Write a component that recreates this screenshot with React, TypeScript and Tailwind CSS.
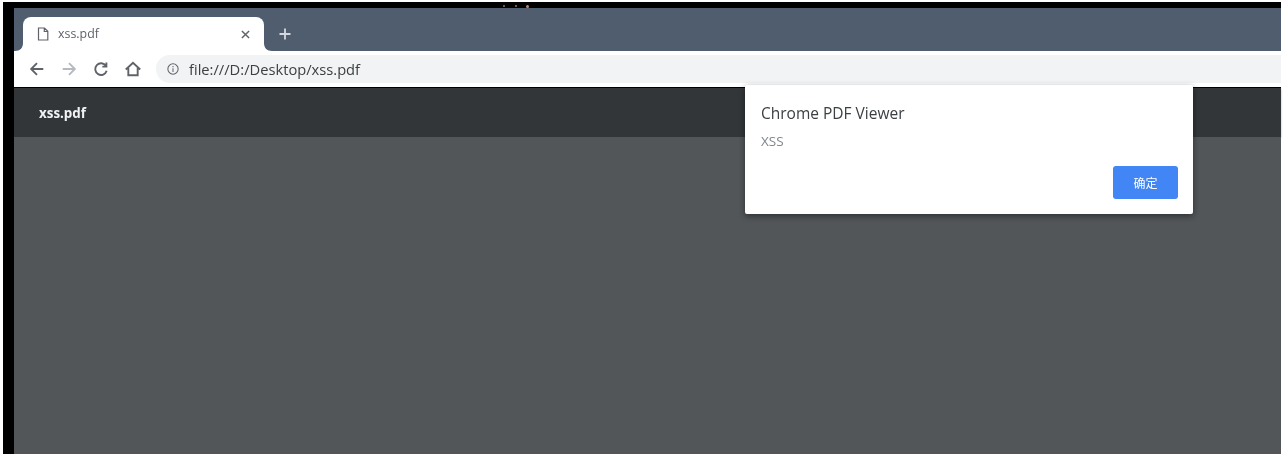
import React from "react";

const font = { fontFamily: '"Open Sans", "Noto Sans CJK SC", sans-serif' };

function Ico({ children, className = "" }: { children: React.ReactNode; className?: string }) {
  return (
    <svg viewBox="0 0 20 20" className={className} fill="none" stroke="currentColor" strokeWidth={2.1}>
      {children}
    </svg>
  );
}

export default function App() {
  return (
    <div className="relative h-[459px] w-full overflow-hidden bg-white pt-[2px] pr-[6px] pb-[5px] pl-[3px] blur-[0.5px]" style={font}>
      <div className="flex h-full flex-col bg-black pt-[6px] pl-[11px]">
        {/* tab strip */}
        <div className="flex h-[43px] shrink-0 items-end bg-[#505d6e] pl-[9px]">
          <div className="relative flex h-[34px] w-[241px] items-center rounded-t-[8px] bg-white pr-[14px] pl-[14px]">
            <svg viewBox="0 0 8 8" className="absolute bottom-0 left-[-8px] h-[8px] w-[8px] text-white" fill="currentColor">
              <path d="M8 0V8H0C5 8 8 5 8 0Z" />
            </svg>
            <svg viewBox="0 0 8 8" className="absolute right-[-8px] bottom-0 h-[8px] w-[8px] text-white" fill="currentColor">
              <path d="M0 0V8H8C3 8 0 5 0 0Z" />
            </svg>
            <svg viewBox="0 0 12 14" className="h-[14px] w-[12px] text-[#5f6368]" fill="none" stroke="currentColor" strokeWidth={1.2}>
              <path d="M1.5 1H7.500L10.800 4.300V13H1.500Z M7.300 1V4.500H10.800" />
            </svg>
            <span className="ml-[9px] flex-1 text-[12.4px] text-[#5f6368]">xss.pdf</span>
            <svg viewBox="0 0 10 10" className="h-[9px] w-[9px] text-[#5f6368]" fill="none" stroke="currentColor" strokeWidth={1.6}>
              <path d="M1 1L9 9M9 1L1 9" />
            </svg>
          </div>
          <svg viewBox="0 0 12 12" className="mb-[11px] ml-[15px] h-[12px] w-[12px] text-[#d5d9de]" fill="none" stroke="currentColor" strokeWidth={1.8}>
            <path d="M6 0.500V11.500M0.500 6H11.500" />
          </svg>
        </div>

        {/* toolbar */}
        <div className="flex h-[36px] shrink-0 items-center bg-white pl-[14px]">
          <Ico className="h-[18px] w-[18px] text-[#5f6368]">
            <path d="M17 10H4M10 3.500L3.500 10L10 16.500" />
          </Ico>
          <Ico className="ml-[14px] h-[18px] w-[18px] text-[#b6babf]">
            <path d="M3 10H16M10 3.500L16.500 10L10 16.500" />
          </Ico>
          <Ico className="ml-[14px] h-[18px] w-[18px] text-[#5f6368]">
            <path d="M15.500 6.500A6.500 6.500 0 1 0 16.300 12M16 2.800V7.300H11.500" />
          </Ico>
          <Ico className="ml-[14px] h-[18px] w-[18px] text-[#5f6368]">
            <path d="M2 10.500L10 3L18 10.500M4.800 9V17H15.200V9" />
          </Ico>
          <div className="ml-[14px] flex h-[28px] flex-1 items-center rounded-l-[14px] bg-[#f1f3f4] pl-[11px]">
            <svg viewBox="0 0 14 14" className="h-[12px] w-[12px] text-[#5f6368]" fill="none" stroke="currentColor" strokeWidth={1.2}>
              <circle cx="7" cy="7" r="6" />
              <path d="M7 6V10.500M7 3.500V5" />
            </svg>
            <span className="ml-[10px] text-[14.7px] text-[#3c4043]">file:///D:/Desktop/xss.pdf</span>
          </div>
        </div>

        {/* pdf toolbar */}
        <div className="mt-[1px] flex h-[49px] shrink-0 items-center bg-[#323639] pt-[2px] pl-[25px] shadow-[0_1px_2px_rgba(0,0,0,0.3)]">
          <span className="text-[13.4px] font-bold text-[#f1f3f4]">xss.pdf</span>
        </div>

        {/* viewer body */}
        <div className="flex-1 bg-[#525659]" />
      </div>

      {/* specks of the desktop showing above the window */}
      <span className="absolute top-[5px] left-[503px] h-[2px] w-[2px] rounded-full bg-[#8a7a78]" />
      <span className="absolute top-[5px] left-[515px] h-[2px] w-[2px] rounded-full bg-[#8a7a78]" />
      <span className="absolute top-[5px] left-[526px] h-[3px] w-[3px] rounded-full bg-[#c08a78]" />

      {/* alert dialog */}
      <div className="absolute top-[85px] left-[745px] flex h-[129px] w-[448px] flex-col rounded-[2px] bg-white pt-[18px] pr-[15px] pl-[16px] shadow-[0_2px_6px_rgba(0,0,0,0.45)]">
        <div className="text-[15.500px] leading-[20px] text-[#3c4043]">Chrome PDF Viewer</div>
        <div className="mt-[9px] text-[13.500px] leading-[18px] text-[#80868b]">XSS</div>
        <div className="mt-[16px] flex justify-end">
          <button className="flex h-[33px] w-[65px] items-center justify-center rounded-[3px] bg-[#4285f4] pt-[2px] text-[12px] text-white">
            确定
          </button>
        </div>
      </div>
    </div>
  );
}
